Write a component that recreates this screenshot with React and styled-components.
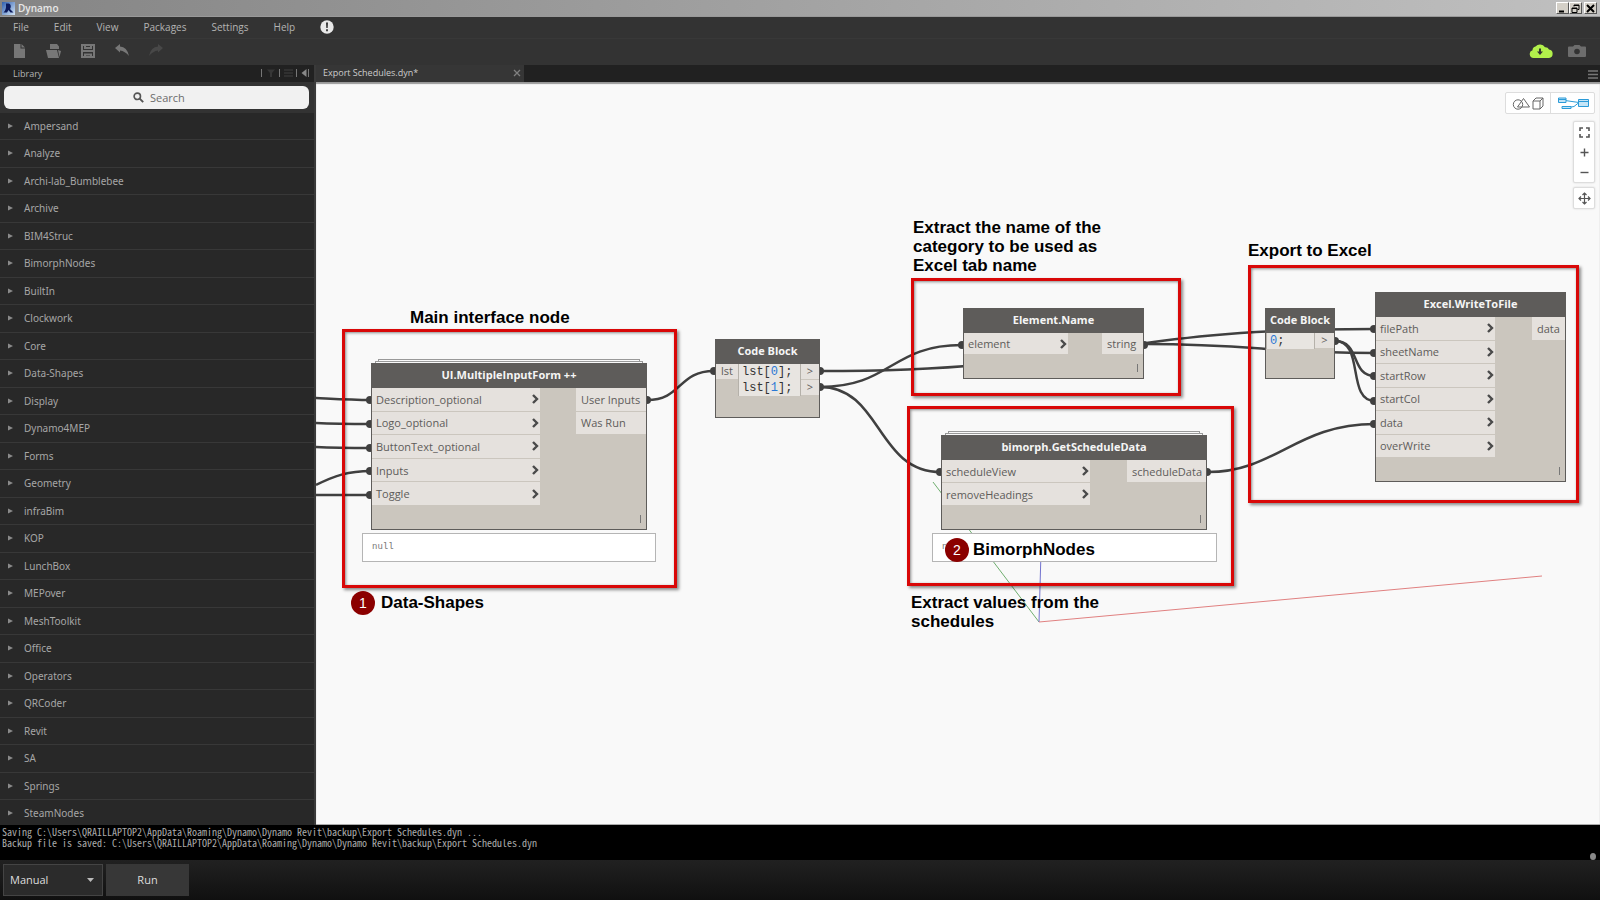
import React from "react";
import styled, { createGlobalStyle } from "styled-components";

const categories = [
  "Ampersand",
  "Analyze",
  "Archi-lab_Bumblebee",
  "Archive",
  "BIM4Struc",
  "BimorphNodes",
  "BuiltIn",
  "Clockwork",
  "Core",
  "Data-Shapes",
  "Display",
  "Dynamo4MEP",
  "Forms",
  "Geometry",
  "infraBim",
  "KOP",
  "LunchBox",
  "MEPover",
  "MeshToolkit",
  "Office",
  "Operators",
  "QRCoder",
  "Revit",
  "SA",
  "Springs",
  "SteamNodes",
];

const nodes = [
  {
    title: "UI.MultipleInputForm ++",
    x: 55, y: 281, w: 276, h: 167, inW: 168, outW: 70,
    inputs: ["Description_optional", "Logo_optional", "ButtonText_optional", "Inputs", "Toggle"],
    outputs: ["User Inputs", "Was Run"],
    stacked: true,
  },
  {
    title: "Element.Name",
    x: 647, y: 226, w: 181, h: 71, inW: 104, outW: 41,
    inputs: ["element"],
    outputs: ["string"],
  },
  {
    title: "bimorph.GetScheduleData",
    x: 625, y: 353, w: 266, h: 95, inW: 148, outW: 79,
    inputs: ["scheduleView", "removeHeadings"],
    outputs: ["scheduleData"],
    stacked: true,
  },
  {
    title: "Excel.WriteToFile",
    x: 1059, y: 210, w: 191, h: 190, inW: 119, outW: 33,
    inputs: ["filePath", "sheetName", "startRow", "startCol", "data", "overWrite"],
    outputs: ["data"],
  },
];

const wires = [
  "M0 316 C20 317 35 318 55 318",
  "M0 341 C20 342 35 342 55 342",
  "M0 365 C20 366 35 366 55 366",
  "M0 403 C18 394 32 389 55 389",
  "M0 413 L55 413",
  "M331 318 C366 318 362 289 398 289",
  "M504 289 C782 289 782 247 1059 247",
  "M504 305 C575 305 575 263 646 263",
  "M504 305 C566 305 560 390 625 390",
  "M829 262 C940 262 950 271 1059 271",
  "M1019 259 C1045 259 1034 294 1059 294",
  "M1019 259 C1049 259 1030 319 1059 319",
  "M892 390 C960 390 980 342 1059 342",
];

const ports = [
  [54, 318], [54, 342], [54, 366], [54, 389], [54, 413], [331, 318],
  [398, 289], [504, 289], [504, 305], [646, 263], [828, 263], [624, 390],
  [891, 390], [1019, 259], [1058, 247], [1058, 271], [1058, 294], [1058, 319], [1058, 342],
];

const Chevron = () => (
  <svg width="7" height="10" viewBox="0 0 7 10">
    <path d="M1 1 L5 5 L1 9" fill="none" stroke="#4a4a4a" strokeWidth="2.400" />
  </svg>
);

const GraphNode = ({ node }) => (
  <NodeBox $x={node.x} $y={node.y} $w={node.w} $h={node.h}>
    {node.stacked && (
      <>
        <StackEdge $inset={6} $top={-5} />
        <StackEdge $inset={3} $top={-3} />
      </>
    )}
    <NodeTitle>{node.title}</NodeTitle>
    <PortGrid $rows={node.inputs.length} $in={node.inW} $out={node.outW}>
      {node.inputs.map((name, i) => (
        <InPort key={name} $row={i + 1}>
          {name}
          <Chevron />
        </InPort>
      ))}
      {node.outputs.map((name, i) => (
        <OutPort key={name} $row={i + 1}>{name}</OutPort>
      ))}
    </PortGrid>
    <NodeFooter>
      <Lacing />
    </NodeFooter>
  </NodeBox>
);

const App = () => {
  return (
    <Window>
      <GlobalStyle />
      <TitleBar>
        <AppTitle>
          <svg width="13" height="13" viewBox="0 0 13 13">
            <defs>
              <linearGradient id="logo" x1="0" x2="1" y1="0" y2="1">
                <stop offset="0" stopColor="#2e5fae" />
                <stop offset="1" stopColor="#d4e6f8" />
              </linearGradient>
            </defs>
            <rect width="13" height="13" fill="url(#logo)" />
            <path d="M4 1.500 H7 Q9.500 2.500 8.500 6 L8 7 L11.500 10.500 H8.500 L6.500 8 L5 10.500 H1.500 Q4.500 8 4 1.500Z" fill="#0b1a5c" />
          </svg>
          Dynamo
        </AppTitle>
        <WindowButtons>
          <WinButton aria-label="Minimize">
            <svg width="9" height="9" viewBox="0 0 9 9"><path d="M1 7.500 H6" stroke="#000" strokeWidth="2" /></svg>
          </WinButton>
          <WinButton aria-label="Restore">
            <svg width="9" height="9" viewBox="0 0 9 9" fill="none" stroke="#000">
              <path d="M3 2.500V1H8V5.500H6.500M3 1.500H8M1 4H6V8.500H1ZM1 4.500H6" />
            </svg>
          </WinButton>
          <WinButton aria-label="Close" $apart>
            <svg width="9" height="9" viewBox="0 0 9 9"><path d="M1 1 L8 8 M8 1 L1 8" stroke="#000" strokeWidth="2" /></svg>
          </WinButton>
        </WindowButtons>
      </TitleBar>

      <MenuBar>
        {["File", "Edit", "View", "Packages", "Settings", "Help"].map((m) => (
          <MenuButton key={m}>{m}</MenuButton>
        ))}
        <MenuButton aria-label="Notifications">
          <svg width="14" height="14" viewBox="0 0 14 14">
            <circle cx="7" cy="7" r="6.700" fill="#e8e8e8" />
            <path d="M6 2.500H8L7.700 8H6.300ZM6.100 9.300H7.900V11.200H6.100Z" fill="#333" />
          </svg>
        </MenuButton>
      </MenuBar>

      <ToolBar>
        <ToolGroup>
          <ToolButton aria-label="New">
            <svg width="16" height="16" viewBox="0 0 16 16"><path d="M2 1H8.500V5.500H13V15H2ZM9.500 1L13 4.600H9.500Z" fill="#777" /></svg>
          </ToolButton>
          <ToolButton aria-label="Open">
            <svg width="18" height="16" viewBox="0 0 18 16">
              <path d="M5 1H12L14 3.500V6H5ZM1 7H12L14 15H3ZM13 7L16 8L14.500 14Z" fill="#777" />
            </svg>
          </ToolButton>
          <ToolButton aria-label="Save">
            <svg width="16" height="16" viewBox="0 0 16 16" fill="none" stroke="#777" strokeWidth="2">
              <path d="M2 2H14V14H2ZM2 8H14M5 2V5H11V2M5 14V11.500H11V14" />
            </svg>
          </ToolButton>
          <ToolButton aria-label="Undo">
            <svg width="16" height="16" viewBox="0 0 16 16"><path d="M1 5L6 1V3.600Q13 4 15 13Q11 8 6 7.500V9.500Z" fill="#777" /></svg>
          </ToolButton>
          <ToolButton aria-label="Redo">
            <svg width="16" height="16" viewBox="0 0 16 16"><path d="M15 5L10 1V3.600Q3 4 1 13Q5 8 10 7.500V9.500Z" fill="#484848" /></svg>
          </ToolButton>
        </ToolGroup>
        <ToolGroup>
          <ToolButton aria-label="Updates available">
            <svg width="24" height="16" viewBox="0 0 24 16">
              <path d="M4.500 15A4 4 0 0 1 3.500 7.200A4 4 0 0 1 6.500 3.500A6 6 0 0 1 16 4.200A4 4 0 0 1 20 6.500A4.300 4.300 0 0 1 20 15Z" fill="#b2f04b" />
              <path d="M10 5.500H12V8.500H14L11 12L8 8.500H10Z" fill="#333" />
            </svg>
          </ToolButton>
          <ToolButton aria-label="Take screenshot">
            <svg width="18" height="14" viewBox="0 0 18 14">
              <path d="M1 2.500H5L6.500 1H11.500L13 2.500H17Q18 2.500 18 3.500V12Q18 13 17 13H1Q0 13 0 12V3.500Q0 2.500 1 2.500Z" fill="#6d6d6d" />
              <circle cx="9" cy="7.500" r="2.800" fill="#333" />
            </svg>
          </ToolButton>
        </ToolGroup>
      </ToolBar>

      <Main>
        <Library>
          <LibraryHead>
            Library
            <svg width="50" height="10" viewBox="0 0 50 10">
              <path d="M1.500 1V9M19.500 1V9M36.500 1V9M48.500 1V9" stroke="#777" />
              <path d="M7 1.500H15L12 5V9H10V5Z" fill="#363636" />
              <path d="M24 2H33M24 5H33M24 8H33" stroke="#363636" strokeWidth="1.500" />
              <path d="M46.500 1V9L41.500 5Z" fill="#888" />
            </svg>
          </LibraryHead>
          <SearchArea>
            <SearchBox>
              <svg width="11" height="11" viewBox="0 0 11 11" fill="none" stroke="#555">
                <circle cx="4.300" cy="4.300" r="3.200" strokeWidth="1.600" />
                <path d="M6.700 6.700L10.200 10.200" strokeWidth="1.900" />
              </svg>
              <SearchInput type="text" placeholder="Search" aria-label="Search" />
            </SearchBox>
          </SearchArea>
          <CategoryList>
            {categories.map((c) => (
              <CategoryItem key={c}>
                <CategoryButton>
                  <svg width="5" height="6" viewBox="0 0 5 6"><path d="M0 0.500L5 3L0 5.500Z" fill="#8a8a8a" /></svg>
                  {c}
                </CategoryButton>
              </CategoryItem>
            ))}
          </CategoryList>
        </Library>

        <Workspace>
          <TabStrip>
            <Tab>
              Export Schedules.dyn*
              <TabClose aria-label="Close tab">
                <svg width="8" height="8" viewBox="0 0 8 8"><path d="M1 1L7 7M7 1L1 7" stroke="#808080" strokeWidth="1.300" /></svg>
              </TabClose>
            </Tab>
            <TabMenu aria-label="Tabs">
              <svg width="10" height="9" viewBox="0 0 10 9"><path d="M0 1H10M0 4.500H10M0 8H10" stroke="#777" strokeWidth="1.300" /></svg>
            </TabMenu>
          </TabStrip>
          <Canvas>
            <Wires>
              <path d="M617 400L723 540" stroke="#6fae6f" />
              <path d="M725 470L723 540" stroke="#7373cf" />
              <path d="M723 540L1226 494" stroke="#e08080" />
              <g fill="none" stroke="#404040" strokeWidth="2.500">
                {wires.map((d) => <path key={d} d={d} />)}
              </g>
              <g fill="#404040">
                {ports.map(([x, y]) => <circle key={x + "-" + y} cx={x} cy={y} r="4" />)}
              </g>
            </Wires>

            {nodes.map((n) => <GraphNode key={n.title} node={n} />)}

            <NodeBox $x={399} $y={257} $w={105} $h={79}>
              <NodeTitle>Code Block</NodeTitle>
              <CodeGrid $columns="22px 1fr 18px">
                <CodePort>lst</CodePort>
                <CodeText>lst[<b>0</b>];</CodeText>
                <CodePort>&gt;</CodePort>
                <span />
                <CodeText>lst[<b>1</b>];</CodeText>
                <CodePort>&gt;</CodePort>
              </CodeGrid>
            </NodeBox>
            <NodeBox $x={949} $y={226} $w={70} $h={71}>
              <NodeTitle>Code Block</NodeTitle>
              <CodeGrid $columns="1fr 19px">
                <CodeText><b>0</b>;</CodeText>
                <CodePort>&gt;</CodePort>
              </CodeGrid>
            </NodeBox>

            <Preview $x={46} $y={451} $w={294}>null</Preview>
            <Preview $x={616} $y={451} $w={285}>null</Preview>

            <Frame $x={26} $y={247} $w={335} $h={259} />
            <Frame $x={595} $y={196} $w={270} $h={118} />
            <Frame $x={591} $y={324} $w={327} $h={180} />
            <Frame $x={932} $y={183} $w={331} $h={238} />

            <Note $x={94} $y={226}>Main interface node</Note>
            <Note $x={597} $y={136}>
              Extract the name of the<br />category to be used as<br />Excel tab name
            </Note>
            <Note $x={932} $y={159}>Export to Excel</Note>
            <Note $x={595} $y={511}>Extract values from the<br />schedules</Note>
            <Note $x={65} $y={511}>Data-Shapes</Note>
            <Note $x={657} $y={458}>BimorphNodes</Note>
            <Badge $x={35} $y={509}>1</Badge>
            <Badge $x={629} $y={456}>2</Badge>

            <Controls>
              <ViewSwitch>
                <ViewButton aria-label="Background 3D preview">
                  <svg width="32" height="13" viewBox="0 0 32 13" fill="none" stroke="#666">
                    <circle cx="6" cy="7.500" r="4.700" />
                    <path d="M11.500 1.500L17.500 10H5.500ZM21 4H28V12H21ZM21 4L24 1H31V9L28 12M28 4L31 1" />
                  </svg>
                </ViewButton>
                <ViewButton aria-label="Graph view">
                  <svg width="32" height="13" viewBox="0 0 32 13" fill="#c5e5f7" stroke="#2b9bd8">
                    <path d="M8 3.500L22 5.500M14 10L17 9.500L22 5.500" fill="none" />
                    <path d="M1.500 1H9V5.500H1.500ZM1.500 2.500H9M5 9.500H14V11.500H5ZM21.500 2.500H31.500V9.500H21.500ZM21.500 4.500H31.500" />
                  </svg>
                </ViewButton>
              </ViewSwitch>
              <ZoomPanel>
                <ZoomButton aria-label="Fit to view">
                  <svg width="11" height="11" viewBox="0 0 11 11" fill="none" stroke="#555" strokeWidth="1.600">
                    <path d="M1 4V1H4M7 1H10V4M10 7V10H7M4 10H1V7" />
                  </svg>
                </ZoomButton>
                <ZoomButton aria-label="Zoom in">
                  <svg width="11" height="11" viewBox="0 0 11 11" stroke="#555" strokeWidth="1.400"><path d="M1.500 5.500H9.500M5.500 1.500V9.500" /></svg>
                </ZoomButton>
                <ZoomButton aria-label="Zoom out">
                  <svg width="11" height="11" viewBox="0 0 11 11" stroke="#555" strokeWidth="1.400"><path d="M1.500 5.500H9.500" /></svg>
                </ZoomButton>
              </ZoomPanel>
              <ZoomPanel>
                <ZoomButton aria-label="Pan">
                  <svg width="13" height="13" viewBox="0 0 13 13" fill="none" stroke="#555" strokeWidth="1.200">
                    <path d="M1 6.500H12M6.500 1V12M4.500 3L6.500 1L8.500 3M4.500 10L6.500 12L8.500 10M3 4.500L1 6.500L3 8.500M10 4.500L12 6.500L10 8.500" />
                  </svg>
                </ZoomButton>
              </ZoomPanel>
            </Controls>
          </Canvas>
        </Workspace>
      </Main>

      <Console>
        <ConsoleText>
          Saving C:\Users\QRAILLAPTOP2\AppData\Roaming\Dynamo\Dynamo Revit\backup\Export Schedules.dyn ...
          <br />
          Backup file is saved: C:\Users\QRAILLAPTOP2\AppData\Roaming\Dynamo\Dynamo Revit\backup\Export Schedules.dyn
        </ConsoleText>
        <ScrollThumb />
      </Console>

      <RunBar>
        <RunSelectBox>
          <RunSelect aria-label="Run mode" defaultValue="Manual">
            <option>Manual</option>
            <option>Automatic</option>
          </RunSelect>
          <svg width="7" height="4" viewBox="0 0 7 4"><path d="M0 0H7L3.500 4Z" fill="#bbb" /></svg>
        </RunSelectBox>
        <RunButton>Run</RunButton>
      </RunBar>
    </Window>
  );
};

const GlobalStyle = createGlobalStyle`
  * { box-sizing: border-box; }
  body { margin: 0; }
  button, input, select { font: inherit; color: inherit; border: 0; margin: 0; padding: 0; background: none; }
  svg { display: block; flex: none; }
`;

const Window = styled.div`
  display: flex;
  flex-direction: column;
  height: 100vh;
  overflow: hidden;
  background: #333;
  color: #b4b4b4;
  font-family: "Open Sans", sans-serif;
  font-size: 11px;
`;

const TitleBar = styled.header`
  display: flex;
  flex: none;
  justify-content: space-between;
  align-items: center;
  height: 17px;
  padding: 0 3px 0 2px;
  background: linear-gradient(90deg, #858585, #c0c0c0);
  border-bottom: 1px solid #999;
`;

const AppTitle = styled.div`
  display: flex;
  align-items: center;
  gap: 3px;
  color: #e8e8e8;
  font-size: 10px;
  font-weight: 600;
`;

const WindowButtons = styled.div`
  display: flex;
`;

const WinButton = styled.button`
  display: flex;
  justify-content: center;
  align-items: center;
  width: 13px;
  height: 12px;
  margin-left: ${(p) => (p.$apart ? 2 : 0)}px;
  background: #d4d0c8;
  border: 1px solid;
  border-color: #fff #555 #555 #fff;
`;

const MenuBar = styled.nav`
  display: flex;
  flex: none;
  align-items: center;
  gap: 25px;
  height: 21px;
  padding: 0 0 2px 13px;
  font-size: 10px;
`;

const MenuButton = styled.button``;

const ToolBar = styled.div`
  display: flex;
  flex: none;
  justify-content: space-between;
  height: 27px;
  padding: 0 13px 2px 9px;
  border-top: 1px solid #383838;
`;

const ToolGroup = styled.div`
  display: flex;
  align-items: center;
  gap: 13px;
`;

const ToolButton = styled.button`
  display: flex;
  justify-content: center;
  min-width: 21px;
`;

const Main = styled.main`
  display: flex;
  flex: 1;
  min-height: 0;
`;

const Library = styled.aside`
  display: flex;
  flex-direction: column;
  width: 316px;
  flex: none;
  border-right: 2px solid #3a3a3a;
`;

const LibraryHead = styled.div`
  display: flex;
  flex: none;
  justify-content: space-between;
  align-items: center;
  height: 17px;
  padding: 0 4px 1px 13px;
  background: #212121;
  font-size: 9px;
`;

const SearchArea = styled.div`
  flex: none;
  height: 31px;
  padding: 4px 5px 4px 4px;
  background: #333;
`;

const SearchBox = styled.label`
  display: flex;
  justify-content: center;
  align-items: center;
  gap: 6px;
  height: 23px;
  padding: 0 0 1px 10px;
  background: #f1f1f1;
  border-radius: 6px;
  color: #666;
  font-size: 11px;
`;

const SearchInput = styled.input`
  width: 40px;
  outline: 0;
  &::placeholder {
    color: #6c6c6c;
    opacity: 1;
  }
`;

const CategoryList = styled.ul`
  flex: 1;
  min-height: 0;
  margin: 0;
  padding: 0;
  overflow: hidden;
  list-style: none;
  background: #282828;
`;

const CategoryItem = styled.li`
  height: 27px;
  border-bottom: 1px solid #383838;
  &:nth-child(even) {
    height: 28px;
  }
`;

const CategoryButton = styled.button`
  display: flex;
  align-items: center;
  gap: 11px;
  width: 100%;
  height: 100%;
  padding: 0 0 1px 8px;
  color: #a6a6a6;
  font: 10px "Noto Sans", sans-serif;
`;

const Workspace = styled.section`
  display: flex;
  flex: 1;
  flex-direction: column;
  min-width: 0;
`;

const TabStrip = styled.div`
  display: flex;
  flex: none;
  justify-content: space-between;
  height: 17px;
  background: #212121;
`;

const Tab = styled.div`
  display: flex;
  justify-content: space-between;
  align-items: center;
  width: 208px;
  padding: 0 3px 2px 7px;
  background: #363636;
  color: #ccc;
  font-size: 9px;
`;

const TabClose = styled.button``;

const TabMenu = styled.button`
  padding: 2px 2px 0 0;
`;

const Canvas = styled.div`
  position: relative;
  flex: 1;
  overflow: hidden;
  background: #f9f9f9;
  box-shadow: inset 0 2px 1px #999, inset 0 -1px 0 #aaa;
`;

const Wires = styled.svg`
  position: absolute;
  left: 0;
  top: 0;
  width: 100%;
  height: 100%;
`;

const NodeBox = styled.article`
  position: absolute;
  left: ${(p) => p.$x}px;
  top: ${(p) => p.$y}px;
  display: flex;
  flex-direction: column;
  width: ${(p) => p.$w}px;
  height: ${(p) => p.$h}px;
  background: #cbc6be;
  border: 1px solid #5e5c5a;
  color: #5e5c5a;
  font-size: 11px;
`;

const StackEdge = styled.div`
  position: absolute;
  left: ${(p) => p.$inset}px;
  right: ${(p) => p.$inset}px;
  top: ${(p) => p.$top}px;
  height: 2px;
  border: 1px solid #999;
  border-bottom: 0;
`;

const NodeTitle = styled.h2`
  flex: none;
  height: 24px;
  margin: 0;
  background: #5e5c5a;
  color: #f5f5f5;
  font-size: 11px;
  font-weight: 700;
  line-height: 21px;
  text-align: center;
  white-space: nowrap;
`;

const PortGrid = styled.div`
  display: grid;
  flex: 1;
  grid-template-columns: ${(p) => p.$in}px 1fr ${(p) => p.$out}px;
  grid-template-rows: repeat(${(p) => p.$rows}, 1fr);
`;

const InPort = styled.div`
  display: flex;
  grid-column: 1;
  grid-row: ${(p) => p.$row};
  justify-content: space-between;
  align-items: center;
  padding: 0 1px 0 4px;
  background: #e5e1dd;
  border-bottom: 1px solid #cbc6be;
`;

const OutPort = styled.div`
  display: flex;
  grid-column: 3;
  grid-row: ${(p) => p.$row};
  align-items: center;
  padding-left: 5px;
  background: #e5e1dd;
  border-bottom: 1px solid #cbc6be;
`;

const NodeFooter = styled.div`
  display: flex;
  flex: none;
  justify-content: flex-end;
  align-items: center;
  height: 23px;
  padding: 2px 5px 0 0;
`;

const Lacing = styled.div`
  width: 1px;
  height: 8px;
  background: #777;
`;

const CodeGrid = styled.div`
  display: grid;
  grid-template-columns: ${(p) => p.$columns};
  grid-auto-rows: 16px;
`;

const CodePort = styled.div`
  background: #e5e1dd;
  border-bottom: 1px solid #cbc6be;
  line-height: 14px;
  text-align: center;
`;

const CodeText = styled.code`
  padding-left: 3px;
  background: #e8e5e1;
  border: solid #b5b1aa;
  border-width: 0 1px;
  color: #333;
  font: 12px/16px "Liberation Mono", monospace;
  b {
    color: #2a78d4;
    font-weight: 400;
  }
`;

const Preview = styled.div`
  position: absolute;
  left: ${(p) => p.$x}px;
  top: ${(p) => p.$y}px;
  width: ${(p) => p.$w}px;
  height: 29px;
  padding-left: 9px;
  background: #fff;
  border: 1px solid #b5b5b5;
  color: #777;
  font: 9px/27px "Liberation Mono", monospace;
`;

const Frame = styled.div`
  position: absolute;
  left: ${(p) => p.$x}px;
  top: ${(p) => p.$y}px;
  width: ${(p) => p.$w}px;
  height: ${(p) => p.$h}px;
  border: 3px solid #d90808;
  box-shadow: 2px 2px 3px rgba(0, 0, 0, 0.45), inset 1px 1px 3px rgba(0, 0, 0, 0.45);
`;

const Note = styled.p`
  position: absolute;
  left: ${(p) => p.$x}px;
  top: ${(p) => p.$y}px;
  margin: 0;
  color: #000;
  font: bold 17px/19px "Liberation Sans", Arial, sans-serif;
  white-space: nowrap;
`;

const Badge = styled.span`
  position: absolute;
  left: ${(p) => p.$x}px;
  top: ${(p) => p.$y}px;
  width: 24px;
  height: 24px;
  border-radius: 50%;
  background: #8b0000;
  color: #fff;
  font: 14px/24px "Liberation Sans", Arial, sans-serif;
  text-align: center;
`;

const Controls = styled.div`
  position: absolute;
  top: 10px;
  right: 5px;
  display: flex;
  flex-direction: column;
  align-items: flex-end;
`;

const ViewSwitch = styled.div`
  display: flex;
  height: 22px;
  margin-bottom: 7px;
  background: #fff;
  border: 1px solid #ddd;
  border-radius: 2px;
`;

const ViewButton = styled.button`
  display: flex;
  justify-content: center;
  align-items: center;
  width: 44px;
  & + & {
    border-left: 1px solid #ddd;
  }
`;

const ZoomPanel = styled.div`
  width: 22px;
  margin-bottom: 4px;
  background: #fff;
  border: 1px solid #ddd;
  border-radius: 2px;
  box-shadow: 0 0 2px rgba(0, 0, 0, 0.15);
`;

const ZoomButton = styled.button`
  display: flex;
  justify-content: center;
  align-items: center;
  width: 20px;
  height: 20px;
`;

const Console = styled.div`
  display: flex;
  flex: none;
  justify-content: space-between;
  align-items: flex-end;
  height: 35px;
  padding: 0 4px 0 2px;
  background: #000;
`;

const ConsoleText = styled.div`
  align-self: flex-start;
  padding-top: 1px;
  color: #aaa;
  font: 10px/11px "Noto Sans Mono CJK SC", "Liberation Mono", monospace;
`;

const ScrollThumb = styled.div`
  width: 6px;
  height: 7px;
  border-radius: 50%;
  background: #888;
`;

const RunBar = styled.footer`
  display: flex;
  flex: none;
  align-items: center;
  gap: 3px;
  height: 40px;
  padding-left: 3px;
  background: linear-gradient(#212121, #101010);
  color: #ddd;
`;

const RunSelectBox = styled.div`
  display: flex;
  align-items: center;
  width: 100px;
  height: 32px;
  padding-right: 8px;
  background: #2b2b2b;
  border: 1px solid #444;
`;

const RunSelect = styled.select`
  flex: 1;
  height: 100%;
  padding: 0 0 1px 6px;
  appearance: none;
  outline: 0;
`;

const RunButton = styled.button`
  width: 83px;
  height: 32px;
  padding-bottom: 1px;
  background: #373737;
`;

export default App;
